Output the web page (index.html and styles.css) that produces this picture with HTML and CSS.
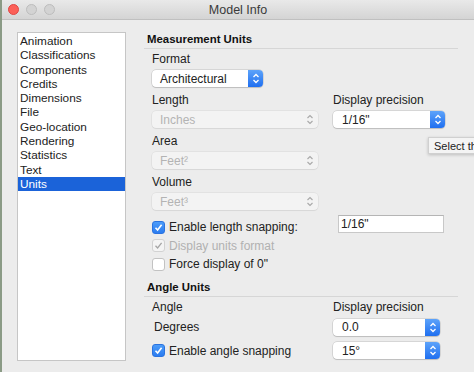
FILE: index.html
```html
<!DOCTYPE html>
<html lang="en">
<head>
    <meta charset="UTF-8">
    <title>Model Info</title>
    <link rel="stylesheet" href="styles.css">
</head>
<body>
    <div class="window">
        <!-- 标题栏 -->
        <div class="titlebar">
            <div class="lights">
                <span class="light red"></span>
                <span class="light"></span>
                <span class="light"></span>
            </div>
            <div class="title">Model Info</div>
        </div>

        <div class="content">
            <ul class="list">
                <li>Animation</li>
                <li>Classifications</li>
                <li>Components</li>
                <li>Credits</li>
                <li>Dimensions</li>
                <li>File</li>
                <li>Geo-location</li>
                <li>Rendering</li>
                <li>Statistics</li>
                <li>Text</li>
                <li class="active">Units</li>
            </ul>

            <div class="panel">
                <h2 class="section-title">Measurement Units</h2>
                <div class="fields">
                    <div class="label first">Format</div>
                    <div class="popup arch">
                        <span>Architectural</span>
                        <span class="cap"><svg width="8" height="11" viewBox="0 0 8 11"><path d="M1.5 4 L4 1.5 L6.5 4 M1.5 7 L4 9.5 L6.5 7" fill="none" stroke="#fff" stroke-width="1.3"/></svg></span>
                    </div>

                    <div class="row label">
                        <div>Length</div>
                        <div>Display precision</div>
                    </div>
                    <div class="row popups">
                        <div class="popup disabled">
                            <span>Inches</span>
                            <span class="cap"><svg width="8" height="11" viewBox="0 0 8 11"><path d="M1.5 4 L4 1.5 L6.5 4 M1.5 7 L4 9.5 L6.5 7" fill="none" stroke="#a8a8a8" stroke-width="1.1"/></svg></span>
                        </div>
                        <div class="popup wide">
                            <span>1/16"</span>
                            <span class="cap"><svg width="8" height="11" viewBox="0 0 8 11"><path d="M1.5 4 L4 1.5 L6.5 4 M1.5 7 L4 9.5 L6.5 7" fill="none" stroke="#fff" stroke-width="1.3"/></svg></span>
                        </div>
                    </div>

                    <div class="label">Area</div>
                    <div class="popup disabled">
                        <span>Feet²</span>
                        <span class="cap"><svg width="8" height="11" viewBox="0 0 8 11"><path d="M1.5 4 L4 1.5 L6.5 4 M1.5 7 L4 9.5 L6.5 7" fill="none" stroke="#a8a8a8" stroke-width="1.1"/></svg></span>
                    </div>

                    <div class="label">Volume</div>
                    <div class="popup disabled">
                        <span>Feet³</span>
                        <span class="cap"><svg width="8" height="11" viewBox="0 0 8 11"><path d="M1.5 4 L4 1.5 L6.5 4 M1.5 7 L4 9.5 L6.5 7" fill="none" stroke="#a8a8a8" stroke-width="1.1"/></svg></span>
                    </div>

                    <div class="row check-row snap">
                        <label class="check">
                            <span class="box on"><svg width="11" height="11" viewBox="0 0 11 11"><path d="M2.5 5.8 L4.6 8 L8.6 2.8" fill="none" stroke="#fff" stroke-width="1.6"/></svg></span>
                            Enable length snapping:
                        </label>
                        <div class="textfield">1/16"</div>
                    </div>
                    <div class="row check-row">
                        <label class="check disabled">
                            <span class="box dim"><svg width="11" height="11" viewBox="0 0 11 11"><path d="M2.5 5.8 L4.6 8 L8.6 2.8" fill="none" stroke="#a5a5a5" stroke-width="1.3"/></svg></span>
                            Display units format
                        </label>
                    </div>
                    <div class="row check-row">
                        <label class="check">
                            <span class="box"></span>
                            Force display of 0"
                        </label>
                    </div>
                </div>

                <h2 class="section-title second">Angle Units</h2>
                <div class="fields">
                    <div class="row label first">
                        <div>Angle</div>
                        <div>Display precision</div>
                    </div>
                    <div class="row popups angle">
                        <div class="degrees">Degrees</div>
                        <div class="popup short">
                            <span>0.0</span>
                            <span class="cap"><svg width="8" height="11" viewBox="0 0 8 11"><path d="M1.5 4 L4 1.5 L6.5 4 M1.5 7 L4 9.5 L6.5 7" fill="none" stroke="#fff" stroke-width="1.3"/></svg></span>
                        </div>
                    </div>
                    <div class="row popups angle last">
                        <label class="check">
                            <span class="box on"><svg width="11" height="11" viewBox="0 0 11 11"><path d="M2.5 5.8 L4.6 8 L8.6 2.8" fill="none" stroke="#fff" stroke-width="1.6"/></svg></span>
                            Enable angle snapping
                        </label>
                        <div class="popup short">
                            <span>15°</span>
                            <span class="cap"><svg width="8" height="11" viewBox="0 0 8 11"><path d="M1.5 4 L4 1.5 L6.5 4 M1.5 7 L4 9.5 L6.5 7" fill="none" stroke="#fff" stroke-width="1.3"/></svg></span>
                        </div>
                    </div>
                </div>
            </div>
        </div>

        <!-- 提示框 -->
        <div class="tooltip">Select the</div>
    </div>
</body>
</html>
```

FILE: styles.css
```css
* {
    margin: 0;
    padding: 0;
    box-sizing: border-box;
}

html,
body {
    width: 100%;
    height: 100%;
}

body {
    background: #8b9b86;
    font-family: "Liberation Sans", Arial, sans-serif;
    color: #222;
    overflow: hidden;
}

.window {
    position: relative;
    width: 472px;
    height: 372px;
    margin-left: 2px;
    background: #ececec;
    overflow: hidden;
}

/* 标题栏 */
.titlebar {
    position: relative;
    height: 20px;
    background: linear-gradient(#e9e9e9, #d4d4d4);
    border-bottom: 1px solid #c0c0c0;
}

.lights {
    position: absolute;
    left: 6px;
    top: 4px;
    display: flex;
    gap: 7px;
}

.light {
    width: 11px;
    height: 11px;
    border-radius: 50%;
    background: #d3d3d3;
    border: 1px solid #bdbdbd;
}

.light.red {
    background: #fc5f57;
    border-color: #df4744;
}

.title {
    text-align: center;
    font-size: 12.5px;
    line-height: 20px;
    color: #3a3a3a;
}

.content {
    display: flex;
    padding-top: 12px;
}

/* 左侧列表 */
.list {
    list-style: none;
    width: 109px;
    height: 329px;
    margin-left: 15px;
    background: #fff;
    border: 1px solid #c6c6c6;
    padding-top: 1px;
}

.list li {
    height: 14.3px;
    line-height: 14.3px;
    font-size: 11.8px;
    padding-left: 2px;
}

.list li.active {
    background: #1b63d9;
    color: #fff;
}

/* 右侧面板 */
.panel {
    width: 314px;
    margin-left: 18px;
    margin-top: -1px;
}

.section-title {
    font-size: 11.4px;
    font-weight: bold;
    line-height: 16px;
    padding-left: 3px;
    padding-bottom: 1px;
    border-bottom: 1px solid #d6d6d6;
    color: #111;
}

.section-title.second {
    margin-top: 5.5px;
}

.fields {
    padding-left: 8px;
    font-size: 12px;
}

.row {
    display: grid;
    grid-template-columns: 181px 1fr;
}

.label {
    height: 14px;
    line-height: 14px;
    margin-top: 6px;
}

.label.first {
    margin-top: 3px;
}

.popups {
    margin-top: 4px;
}

.fields > .popup {
    margin-top: 4px;
}

.popup {
    display: flex;
    align-items: center;
    justify-content: space-between;
    height: 17px;
    background: #fff;
    border-radius: 4px;
    box-shadow: 0 0 0 0.5px rgba(0, 0, 0, 0.18), 0 1px 1px rgba(0, 0, 0, 0.12);
    padding-left: 8px;
    width: 166px;
}

.popup.arch {
    width: 111px;
}

.popup.wide {
    width: 112px;
    padding-left: 9px;
}

.popup.short {
    width: 107px;
    padding-left: 9px;
}

.popup .cap {
    width: 15px;
    height: 17px;
    border-radius: 0 4px 4px 0;
    background: linear-gradient(#5da3fa, #1f6ff0);
    display: flex;
    align-items: center;
    justify-content: center;
}

.popup.disabled {
    background: #f3f3f3;
    color: #b3b3b3;
    box-shadow: 0 0 0 0.5px rgba(0, 0, 0, 0.08), 0 1px 1px rgba(0, 0, 0, 0.05);
}

.popup.disabled .cap {
    background: none;
    width: 16px;
}

/* 复选框 */
.check-row {
    height: 18.5px;
    line-height: 18.5px;
}

.check-row.snap {
    margin-top: 8px;
}

.check {
    display: flex;
    align-items: center;
    gap: 4px;
}

.check.disabled {
    color: #b1b1b1;
}

.box {
    width: 13px;
    height: 13px;
    border-radius: 3px;
    background: #fff;
    border: 1px solid #c2c2c2;
    display: flex;
    align-items: center;
    justify-content: center;
}

.box.on {
    background: linear-gradient(#4c9cf9, #2b7cf0);
    border-color: #2a73e0;
}

.box.dim {
    background: #f4f4f4;
    border-color: #d2d2d2;
}

.textfield {
    width: 106px;
    height: 18px;
    margin-top: -3px;
    margin-left: 5px;
    background: #fff;
    border: 1px solid #c8c8c8;
    border-top-color: #b5b5b5;
    line-height: 16px;
    padding-left: 2px;
}

.angle {
    align-items: center;
}

.angle .popup {
    margin-top: 0;
}

.popups.angle {
    margin-top: 4.5px;
}

.popups.angle.last {
    margin-top: 6.5px;
}

.degrees {
    padding-left: 2px;
}

/* 提示框 */
.tooltip {
    position: absolute;
    left: 426px;
    top: 137px;
    height: 17px;
    padding: 0 6px 0 5px;
    line-height: 16px;
    font-size: 11px;
    white-space: nowrap;
    background: #f4f4f4;
    border: 1px solid #d0d0d0;
    box-shadow: 0 1px 3px rgba(0, 0, 0, 0.2);
}
```
